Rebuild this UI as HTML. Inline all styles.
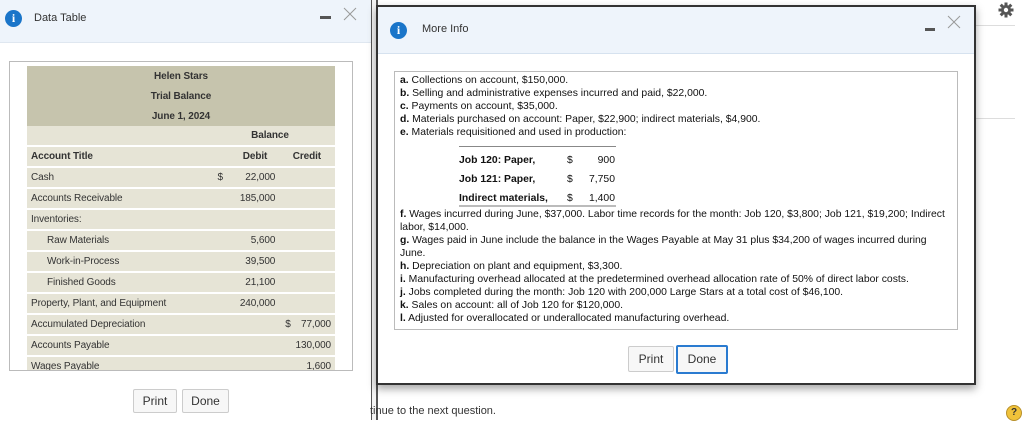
<!DOCTYPE html>
<html><head><style>
body{margin:0;width:1024px;height:420px;position:relative;overflow:hidden;background:#fff;font-family:"Liberation Sans",Arial,sans-serif;color:#333}
.abs{position:absolute}
.ic{width:17px;height:17px;border-radius:50%;background:#1a75c9;color:#fff;font:bold 12px "Liberation Serif",serif;text-align:center;line-height:17px}
.btn{position:absolute;border:1px solid #ccc;border-radius:2px;background:#f7f7f7;font-size:12px;text-align:center;color:#333}
table{border-collapse:collapse;font-size:10px;color:#333;letter-spacing:-0.1px}
td{height:19px;padding:0 4px;border-bottom:2px solid #fff;background:#e6e4d6}
.hd td{background:#c6c4ad;font-weight:bold;text-align:center;height:20px;border:none}
.r{text-align:right}
.mi{font-size:10.4px;line-height:13px;color:#111;white-space:nowrap}
</style></head><body>
<div class="abs" style="left:0;top:0;width:371px;height:420px;background:#fff"></div>
<div class="abs" style="left:0;top:0;width:371px;height:42px;background:#eef4fb;border-bottom:1px solid #dfe7f0"></div>
<div class="abs ic" style="left:5px;top:10px">i</div>
<div class="abs" style="left:34px;top:12px;font-size:11px">Data Table</div>
<div class="abs" style="left:320px;top:16px;width:11px;height:3px;background:#555"></div>
<svg class="abs" style="left:343px;top:7px" width="14" height="14"><path d="M1 1L13 13M13 1L1 13" stroke="#999" stroke-width="1"/></svg>
<div class="abs" style="left:9px;top:61px;width:342px;height:308px;border:1px solid #bbb;overflow:hidden">
<table class="abs" style="left:17px;top:4px;width:308px">
<tr class="hd"><td colspan="4">Helen Stars</td></tr>
<tr class="hd"><td colspan="4">Trial Balance</td></tr>
<tr class="hd"><td colspan="4">June 1, 2024</td></tr>
<tr><td style="width:170px"></td><td colspan="3" style="text-align:center;font-weight:bold">Balance</td></tr>
<tr style="font-weight:bold"><td>Account Title</td><td colspan="2" class="r" style="padding-right:12px">Debit</td><td class="r" style="padding-right:14px">Credit</td></tr>
<tr><td>Cash</td><td class="r" style="width:14px">$</td><td class="r">22,000</td><td></td></tr>
<tr><td>Accounts Receivable</td><td></td><td class="r">185,000</td><td></td></tr>
<tr><td>Inventories:</td><td></td><td></td><td></td></tr>
<tr><td style="padding-left:20px">Raw Materials</td><td></td><td class="r">5,600</td><td></td></tr>
<tr><td style="padding-left:20px">Work-in-Process</td><td></td><td class="r">39,500</td><td></td></tr>
<tr><td style="padding-left:20px">Finished Goods</td><td></td><td class="r">21,100</td><td></td></tr>
<tr><td>Property, Plant, and Equipment</td><td></td><td class="r">240,000</td><td></td></tr>
<tr><td>Accumulated Depreciation</td><td></td><td></td><td class="r"><span style="float:left;padding-left:2px">$</span>77,000</td></tr>
<tr><td>Accounts Payable</td><td></td><td></td><td class="r">130,000</td></tr>
<tr><td>Wages Payable</td><td></td><td></td><td class="r">1,600</td></tr>
</table></div>
<div class="btn" style="left:133px;top:389px;width:42px;height:22px;line-height:22px">Print</div>
<div class="btn" style="left:182px;top:389px;width:45px;height:22px;line-height:22px">Done</div>
<div class="abs" style="left:371px;top:0;width:7px;height:420px;background:#555"></div>
<div class="abs" style="left:372px;top:0;width:4px;height:420px;background:#f4f4f4"></div>
<div class="abs" style="left:370px;top:405px;font-size:11px;color:#333">tinue to the next question.</div>
<div class="abs" style="left:975px;top:25px;width:40px;height:1px;background:#ddd"></div>
<div class="abs" style="left:975px;top:118px;width:40px;height:1px;background:#ddd"></div>
<svg class="abs" style="left:998px;top:2px" width="16" height="16" viewBox="0 0 16 16"><g fill="#555"><circle cx="8" cy="8" r="5"/><rect x="6.5" y="0.5" width="3" height="15"/><rect x="0.5" y="6.5" width="15" height="3"/><rect x="6.5" y="0.5" width="3" height="15" transform="rotate(45 8 8)"/><rect x="6.5" y="0.5" width="3" height="15" transform="rotate(-45 8 8)"/></g><circle cx="8" cy="8" r="2.2" fill="#fff"/></svg>
<div class="abs" style="left:1006px;top:405px;width:14px;height:14px;border-radius:50%;background:#f0c23a;border:1px solid #b8902a;font:bold 10px sans-serif;text-align:center;line-height:14px;color:#333">?</div>
<div class="abs" style="left:376px;top:5px;width:596px;height:376px;border:2px solid #333;background:#fff;box-shadow:0 4px 8px rgba(0,0,0,.35)"></div>
<div class="abs" style="left:378px;top:7px;width:596px;height:46px;background:#eef4fb;border-bottom:1px solid #d6e2ef"></div>
<div class="abs ic" style="left:390px;top:22px">i</div>
<div class="abs" style="left:422px;top:23px;font-size:11px">More Info</div>
<div class="abs" style="left:925px;top:28px;width:10px;height:3px;background:#555"></div>
<svg class="abs" style="left:947px;top:15px" width="14" height="14"><path d="M1 1L13 13M13 1L1 13" stroke="#999" stroke-width="1"/></svg>
<div class="abs" style="left:394px;top:71px;width:562px;height:257px;border:1px solid #bbb"></div>
<div class="abs mi" style="left:400px;top:74px">
<b>a.</b> Collections on account, $150,000.<br>
<b>b.</b> Selling and administrative expenses incurred and paid, $22,000.<br>
<b>c.</b> Payments on account, $35,000.<br>
<b>d.</b> Materials purchased on account: Paper, $22,900; indirect materials, $4,900.<br>
<b>e.</b> Materials requisitioned and used in production:</div>
<div class="abs" style="left:459px;top:146px;width:157px;height:1px;background:#888"></div>
<div class="abs" style="left:459px;top:205px;width:157px;height:2px;background:#bbb"></div>
<div class="abs mi" style="left:459px;top:151px;font-weight:bold;line-height:19px">Job 120: Paper,<br>Job 121: Paper,<br>Indirect materials,</div>
<div class="abs mi" style="left:567px;top:151px;line-height:19px;width:48px">$<span style="float:right">900</span><br>$<span style="float:right">7,750</span><br>$<span style="float:right">1,400</span></div>
<div class="abs mi" style="left:400px;top:208px">
<b>f.</b> Wages incurred during June, $37,000. Labor time records for the month: Job 120, $3,800; Job 121, $19,200; Indirect<br>labor, $14,000.<br>
<b>g.</b> Wages paid in June include the balance in the Wages Payable at May 31 plus $34,200 of wages incurred during<br>June.<br>
<b>h.</b> Depreciation on plant and equipment, $3,300.<br>
<b>i.</b> Manufacturing overhead allocated at the predetermined overhead allocation rate of 50% of direct labor costs.<br>
<b>j.</b> Jobs completed during the month: Job 120 with 200,000 Large Stars at a total cost of $46,100.<br>
<b>k.</b> Sales on account: all of Job 120 for $120,000.<br>
<b>l.</b> Adjusted for overallocated or underallocated manufacturing overhead.</div>
<div class="btn" style="left:628px;top:346px;width:44px;height:24px;line-height:24px">Print</div>
<div class="btn" style="left:676px;top:345px;width:48px;height:25px;line-height:25px;border:2px solid #2a7bd0;background:#f7f7f7">Done</div>
</body></html>
